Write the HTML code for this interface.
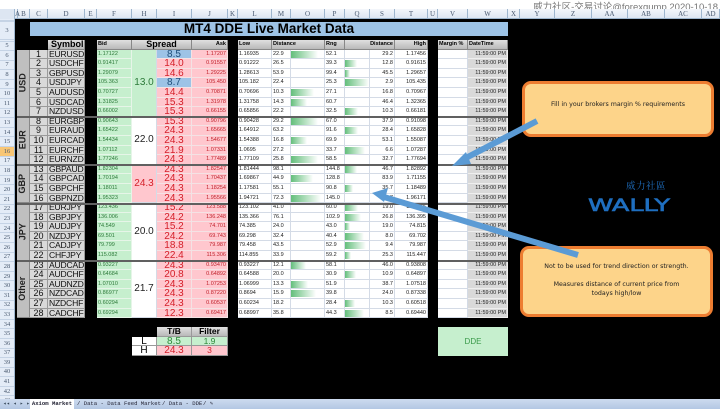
<!DOCTYPE html>
<html><head><meta charset="utf-8">
<style>
*{box-sizing:border-box;margin:0;padding:0}
body{width:720px;height:409px;background:#000;overflow:hidden;position:relative;font-family:"Liberation Sans","Noto Sans CJK SC",sans-serif;}
.top{position:absolute;left:0;top:0;width:720px;height:9px;background:#fff}
.wm{position:absolute;right:2px;top:-1px;font-size:9.5px;color:#777;font-family:"Liberation Sans","Noto Sans CJK SC",sans-serif;white-space:nowrap}
.colh{position:absolute;left:0;top:9px;width:720px;height:10px;background:linear-gradient(#f3f6fb,#dde6f2);border-bottom:1px solid #9eb6ce}
.colh span{position:absolute;top:0;height:10px;border-right:1px solid #9eb6ce;font-size:7px;color:#4a5a70;text-align:center;line-height:10px;font-family:"Liberation Serif",serif}
.rown{position:absolute;left:0;top:19px;width:15px;background:#e4ecf7;border-right:1px solid #9eb6ce}
.rown div{font-size:6.5px;color:#4a5a70;text-align:center;border-bottom:1px solid #c5d3e5;overflow:hidden;font-family:"Liberation Serif",serif;display:flex;align-items:center;justify-content:center}
.title{position:absolute;left:30px;top:22px;width:478px;height:14px;background:#9dc3e6;font-weight:bold;font-size:13.5px;text-align:center;line-height:14px;color:#000}
.g{position:absolute;left:17px;top:40px;display:grid;grid-template-columns:13px 18px 37px 12px 35px 25px 35px 36px 10px 34px 19px 34px 20px 25px 25px 33px 10px 30px 40px;grid-template-rows:repeat(29,9.6px)}
.g>div{font-size:5.5px;line-height:9.6px;white-space:nowrap;overflow:hidden;border-right:1px solid #d4dbe6;border-bottom:1px solid #d4dbe6;background:#fff;padding:0 1px;color:#222}
.g>i{display:block}
.h{background:linear-gradient(#e0e0e0,#b9b9b9)!important;font-weight:bold;border-color:#888!important;color:#000!important}
.hs{font-size:9px!important;text-align:center}
.g>.B{background:#bfbfbf;border-color:#888;font-weight:bold;font-size:9px;display:flex;align-items:center;justify-content:center}
.B span{transform:rotate(-90deg);display:block}
.g>.c{background:#d9d9d9;font-size:9px;text-align:center;border-color:#9a9a9a;color:#111}
.g>.d{background:#d9d9d9;font-size:8.6px;border-color:#9a9a9a;color:#111;padding-left:1px;letter-spacing:-0.2px}
.g>.f{background:#c6efce;color:#2d7a3a;border-color:#e6f5e8}
.g>.H{font-size:10px;display:flex;align-items:center;justify-content:center;color:#222}
.g>.i{background:#ffc7ce;color:#d4202a;font-size:10px;text-align:center;border-color:#f4e2e4}
.g>.bl{background:#9dc3e6;color:#1f4e79}
.g>.j{background:#ffc7ce;color:#c0202a;text-align:right;border-color:#f4e2e4}
.g>.r{text-align:right}
.g>.o,.g>.q{padding:1px 0}
.o b,.q b{display:block;height:7px;background:linear-gradient(to right,#63be7b,#fff)}
.g>.w{background:#d9d9d9;text-align:right;border-color:#eee}
.sep{position:absolute;height:2px;background:#606060}
.box{position:absolute;background:#fdd48a;border:3px solid #ed7d31;border-radius:9px;font-size:6.3px;text-align:center;color:#222;font-family:"DejaVu Sans",sans-serif}
.tb{position:absolute;left:132px;top:327px;display:grid;grid-template-columns:25px 35px 36px;grid-template-rows:repeat(3,9.6px)}
.tb div{font-size:10px;line-height:9.6px;text-align:center;border-right:1px solid #999;border-bottom:1px solid #999}
.dde{position:absolute;left:438px;top:327px;width:70px;height:29px;background:#c6efce;color:#3a9a4a;font-size:8px;text-align:center;line-height:29px}
.tabs{position:absolute;left:0;top:399px;width:720px;height:10px;background:linear-gradient(#cddbef,#b3c7e3);font-family:"Liberation Mono",monospace;font-size:5.6px;line-height:10px;color:#223;white-space:nowrap}
</style></head><body>
<div class="top"><div class="wm">威力社区-交易讨论@forexgump 2020-10-18</div></div>
<div class="colh">
<span style="left:0;width:15px;background:#dde6f2"></span>
<span style="left:15px;width:3px">A</span><span style="left:18px;width:12px">B</span><span style="left:30px;width:18px">C</span><span style="left:48px;width:37px">D</span><span style="left:85px;width:12px">E</span><span style="left:97px;width:35px">F</span><span style="left:132px;width:25px">H</span><span style="left:157px;width:35px">I</span><span style="left:192px;width:36px">J</span><span style="left:228px;width:10px">K</span><span style="left:238px;width:34px">L</span><span style="left:272px;width:19px">M</span><span style="left:291px;width:34px">O</span><span style="left:325px;width:20px">P</span><span style="left:345px;width:25px">Q</span><span style="left:370px;width:25px">S</span><span style="left:395px;width:33px">T</span><span style="left:428px;width:10px">U</span><span style="left:438px;width:30px">V</span><span style="left:468px;width:40px">W</span><span style="left:508px;width:12px">X</span><span style="left:520px;width:35px">Y</span><span style="left:555px;width:37px">Z</span><span style="left:592px;width:36px">AA</span><span style="left:628px;width:37px">AB</span><span style="left:665px;width:37px">AC</span><span style="left:702px;width:18px">AD</span>
</div>
<div class="rown">
<div style="height:1.5px"></div><div style="height:1.5px"></div><div style="height:18px">3</div><div style="height:1.5px"></div>
<div style="height:9.6px">5</div><div style="height:9.6px">6</div><div style="height:9.6px">7</div><div style="height:9.6px">8</div><div style="height:9.6px">9</div><div style="height:9.6px">10</div><div style="height:9.6px">11</div><div style="height:9.6px">12</div><div style="height:9.6px">13</div><div style="height:9.6px">14</div><div style="height:9.6px">15</div><div style="height:9.6px;background:#f8c675">16</div><div style="height:9.6px">17</div><div style="height:9.6px">18</div><div style="height:9.6px">19</div><div style="height:9.6px">20</div><div style="height:9.6px">21</div><div style="height:9.6px">22</div><div style="height:9.6px">23</div><div style="height:9.6px">24</div><div style="height:9.6px">25</div><div style="height:9.6px">26</div><div style="height:9.6px">27</div><div style="height:9.6px">28</div><div style="height:9.6px">29</div><div style="height:9.6px">30</div><div style="height:9.6px">31</div><div style="height:9.6px">32</div><div style="height:9.6px">33</div><div style="height:9.6px">34</div><div style="height:9.6px">35</div><div style="height:9.6px">36</div><div style="height:9.6px">37</div><div style="height:9.6px">39</div><div style="height:9.6px">40</div><div style="height:9.6px">41</div><div style="height:9.6px">42</div><div style="height:9.6px">43</div>
</div>
<div class="title">MT4 DDE Live Market Data</div>

<div class="g">
<i></i><i></i><div class="h hs" style="text-align:left;padding-left:3px">Symbol</div><i></i><div class="h">Bid</div><div class="h hs" style="grid-column:span 2">Spread</div><div class="h r">Ask</div><i></i><div class="h">Low</div><div class="h" style="grid-column:span 2">Distance</div><div class="h">Rng</div><div class="h r" style="grid-column:span 2">Distance</div><div class="h r">High</div><i></i><div class="h">Margin %</div><div class="h">DateTime</div>

<div class="B" style="grid-row:span 7"><span>USD</span></div><div class="c">1</div><div class="d">EURUSD</div><i></i><div class="f">1.17122</div><div class="H" style="grid-row:span 7;background:#c6efce;color:#2d7a3a">13.0</div><div class="i bl">8.5</div><div class="j">1.17207</div><i></i><div>1.16935</div><div>22.9</div><div class="o"><b style="width:27px"></b></div><div>52.1</div><div class="q"></div><div class="r">29.2</div><div class="r">1.17456</div><i></i><div></div><div class="w">11:59:00 PM</div>
<div class="c">2</div><div class="d">USDCHF</div><i></i><div class="f">0.91417</div><div class="i">14.0</div><div class="j">0.91557</div><i></i><div>0.91222</div><div>26.5</div><div class="o"></div><div>39.3</div><div class="q"><b style="width:12px"></b></div><div class="r">12.8</div><div class="r">0.91615</div><i></i><div></div><div class="w">11:59:00 PM</div>
<div class="c">3</div><div class="d">GBPUSD</div><i></i><div class="f">1.29079</div><div class="i">14.6</div><div class="j">1.29225</div><i></i><div>1.28613</div><div>53.9</div><div class="o"></div><div>99.4</div><div class="q"><b style="width:5px"></b></div><div class="r">45.5</div><div class="r">1.29657</div><i></i><div></div><div class="w">11:59:00 PM</div>
<div class="c">4</div><div class="d">USDJPY</div><i></i><div class="f">105.363</div><div class="i bl">8.7</div><div class="j">105.450</div><i></i><div>105.182</div><div>22.4</div><div class="o"></div><div>25.3</div><div class="q"><b style="width:24px"></b></div><div class="r">2.9</div><div class="r">105.435</div><i></i><div></div><div class="w">11:59:00 PM</div>
<div class="c">5</div><div class="d">AUDUSD</div><i></i><div class="f">0.70727</div><div class="i">14.4</div><div class="j">0.70871</div><i></i><div>0.70696</div><div>10.3</div><div class="o"><b style="width:23px"></b></div><div>27.1</div><div class="q"></div><div class="r">16.8</div><div class="r">0.70967</div><i></i><div></div><div class="w">11:59:00 PM</div>
<div class="c">6</div><div class="d">USDCAD</div><i></i><div class="f">1.31825</div><div class="i">15.3</div><div class="j">1.31978</div><i></i><div>1.31758</div><div>14.3</div><div class="o"><b style="width:16px"></b></div><div>60.7</div><div class="q"></div><div class="r">46.4</div><div class="r">1.32365</div><i></i><div></div><div class="w">11:59:00 PM</div>
<div class="c">7</div><div class="d">NZDUSD</div><i></i><div class="f">0.66002</div><div class="i">15.3</div><div class="j">0.66155</div><i></i><div>0.65856</div><div>22.2</div><div class="o"></div><div>32.5</div><div class="q"><b style="width:13px"></b></div><div class="r">10.3</div><div class="r">0.66181</div><i></i><div></div><div class="w">11:59:00 PM</div>

<div class="B" style="grid-row:span 5"><span>EUR</span></div><div class="c">8</div><div class="d">EURGBP</div><i></i><div class="f">0.90643</div><div class="H" style="grid-row:span 5">22.0</div><div class="i">15.3</div><div class="j">0.90796</div><i></i><div>0.90428</div><div>29.2</div><div class="o"><b style="width:27px"></b></div><div>67.0</div><div class="q"></div><div class="r">37.9</div><div class="r">0.91098</div><i></i><div></div><div class="w">11:59:00 PM</div>
<div class="c">9</div><div class="d">EURAUD</div><i></i><div class="f">1.65422</div><div class="i">24.3</div><div class="j">1.65665</div><i></i><div>1.64912</div><div>63.2</div><div class="o"></div><div>91.6</div><div class="q"><b style="width:13px"></b></div><div class="r">28.4</div><div class="r">1.65828</div><i></i><div></div><div class="w">11:59:00 PM</div>
<div class="c">10</div><div class="d">EURCAD</div><i></i><div class="f">1.54434</div><div class="i">24.3</div><div class="j">1.54677</div><i></i><div>1.54388</div><div>16.8</div><div class="o"><b style="width:16px"></b></div><div>69.9</div><div class="q"></div><div class="r">53.1</div><div class="r">1.55087</div><i></i><div></div><div class="w">11:59:00 PM</div>
<div class="c">11</div><div class="d">EURCHF</div><i></i><div class="f">1.07112</div><div class="i">21.9</div><div class="j">1.07331</div><i></i><div>1.0695</div><div>27.2</div><div class="o"></div><div>33.7</div><div class="q"><b style="width:20px"></b></div><div class="r">6.6</div><div class="r">1.07287</div><i></i><div></div><div class="w">11:59:00 PM</div>
<div class="c">12</div><div class="d">EURNZD</div><i></i><div class="f">1.77246</div><div class="i">24.3</div><div class="j">1.77489</div><i></i><div>1.77109</div><div>25.8</div><div class="o"><b style="width:27px"></b></div><div>58.5</div><div class="q"></div><div class="r">32.7</div><div class="r">1.77694</div><i></i><div></div><div class="w">11:59:00 PM</div>

<div class="B" style="grid-row:span 4"><span>GBP</span></div><div class="c">13</div><div class="d">GBPAUD</div><i></i><div class="f">1.82304</div><div class="H" style="grid-row:span 4;background:#ffc7ce;color:#d4202a">24.3</div><div class="i">24.3</div><div class="j">1.82547</div><i></i><div>1.81444</div><div>98.1</div><div class="o"></div><div>144.8</div><div class="q"><b style="width:12px"></b></div><div class="r">46.7</div><div class="r">1.82892</div><i></i><div></div><div class="w">11:59:00 PM</div>
<div class="c">14</div><div class="d">GBPCAD</div><i></i><div class="f">1.70194</div><div class="i">24.3</div><div class="j">1.70437</div><i></i><div>1.69867</div><div>44.9</div><div class="o"><b style="width:22px"></b></div><div>128.8</div><div class="q"></div><div class="r">83.9</div><div class="r">1.71155</div><i></i><div></div><div class="w">11:59:00 PM</div>
<div class="c">15</div><div class="d">GBPCHF</div><i></i><div class="f">1.18011</div><div class="i">24.3</div><div class="j">1.18254</div><i></i><div>1.17581</div><div>55.1</div><div class="o"></div><div>90.8</div><div class="q"><b style="width:8px"></b></div><div class="r">35.7</div><div class="r">1.18489</div><i></i><div></div><div class="w">11:59:00 PM</div>
<div class="c">16</div><div class="d">GBPNZD</div><i></i><div class="f">1.95323</div><div class="i">24.3</div><div class="j">1.95566</div><i></i><div>1.94721</div><div>72.3</div><div class="o"><b style="width:30px"></b></div><div>145.0</div><div class="q"></div><div class="r">72.7</div><div class="r">1.96171</div><i></i><div></div><div class="w">11:59:00 PM</div>

<div class="B" style="grid-row:span 6"><span>JPY</span></div><div class="c">17</div><div class="d">EURJPY</div><i></i><div class="f">123.436</div><div class="H" style="grid-row:span 6">20.0</div><div class="i">15.2</div><div class="j">123.588</div><i></i><div>123.102</div><div>41.0</div><div class="o"></div><div>60.0</div><div class="q"><b style="width:13px"></b></div><div class="r">19.0</div><div class="r">123.475</div><i></i><div></div><div class="w">11:59:00 PM</div>
<div class="c">18</div><div class="d">GBPJPY</div><i></i><div class="f">136.006</div><div class="i">24.2</div><div class="j">136.248</div><i></i><div>135.366</div><div>76.1</div><div class="o"></div><div>102.9</div><div class="q"><b style="width:16px"></b></div><div class="r">26.8</div><div class="r">136.395</div><i></i><div></div><div class="w">11:59:00 PM</div>
<div class="c">19</div><div class="d">AUDJPY</div><i></i><div class="f">74.549</div><div class="i">15.2</div><div class="j">74.701</div><i></i><div>74.385</div><div>24.0</div><div class="o"></div><div>43.0</div><div class="q"><b style="width:5px"></b></div><div class="r">19.0</div><div class="r">74.815</div><i></i><div></div><div class="w">11:59:00 PM</div>
<div class="c">20</div><div class="d">NZDJPY</div><i></i><div class="f">69.501</div><div class="i">24.2</div><div class="j">69.743</div><i></i><div>69.298</div><div>32.4</div><div class="o"></div><div>40.4</div><div class="q"><b style="width:19px"></b></div><div class="r">8.0</div><div class="r">69.702</div><i></i><div></div><div class="w">11:59:00 PM</div>
<div class="c">21</div><div class="d">CADJPY</div><i></i><div class="f">79.799</div><div class="i">18.8</div><div class="j">79.987</div><i></i><div>79.458</div><div>43.5</div><div class="o"></div><div>52.9</div><div class="q"><b style="width:21px"></b></div><div class="r">9.4</div><div class="r">79.987</div><i></i><div></div><div class="w">11:59:00 PM</div>
<div class="c">22</div><div class="d">CHFJPY</div><i></i><div class="f">115.082</div><div class="i">22.4</div><div class="j">115.306</div><i></i><div>114.855</div><div>33.9</div><div class="o"></div><div>59.2</div><div class="q"><b style="width:6px"></b></div><div class="r">25.3</div><div class="r">115.447</div><i></i><div></div><div class="w">11:59:00 PM</div>

<div class="B" style="grid-row:span 6"><span>Other</span></div><div class="c">23</div><div class="d">AUDCAD</div><i></i><div class="f">0.93227</div><div class="H" style="grid-row:span 6">21.7</div><div class="i">24.3</div><div class="j">0.93470</div><i></i><div>0.93227</div><div>12.1</div><div class="o"><b style="width:15px"></b></div><div>58.1</div><div class="q"></div><div class="r">46.0</div><div class="r">0.93808</div><i></i><div></div><div class="w">11:59:00 PM</div>
<div class="c">24</div><div class="d">AUDCHF</div><i></i><div class="f">0.64684</div><div class="i">20.8</div><div class="j">0.64892</div><i></i><div>0.64588</div><div>20.0</div><div class="o"></div><div>30.9</div><div class="q"><b style="width:11px"></b></div><div class="r">10.9</div><div class="r">0.64897</div><i></i><div></div><div class="w">11:59:00 PM</div>
<div class="c">25</div><div class="d">AUDNZD</div><i></i><div class="f">1.07010</div><div class="i">24.3</div><div class="j">1.07253</div><i></i><div>1.06999</div><div>13.3</div><div class="o"><b style="width:17px"></b></div><div>51.9</div><div class="q"></div><div class="r">38.7</div><div class="r">1.07518</div><i></i><div></div><div class="w">11:59:00 PM</div>
<div class="c">26</div><div class="d">NZDCAD</div><i></i><div class="f">0.86977</div><div class="i">24.3</div><div class="j">0.87220</div><i></i><div>0.8694</div><div>15.9</div><div class="o"><b style="width:25px"></b></div><div>39.8</div><div class="q"></div><div class="r">24.0</div><div class="r">0.87338</div><i></i><div></div><div class="w">11:59:00 PM</div>
<div class="c">27</div><div class="d">NZDCHF</div><i></i><div class="f">0.60294</div><div class="i">24.3</div><div class="j">0.60537</div><i></i><div>0.60234</div><div>18.2</div><div class="o"></div><div>28.4</div><div class="q"><b style="width:10px"></b></div><div class="r">10.3</div><div class="r">0.60518</div><i></i><div></div><div class="w">11:59:00 PM</div>
<div class="c">28</div><div class="d">CADCHF</div><i></i><div class="f">0.69294</div><div class="i">12.3</div><div class="j">0.69417</div><i></i><div>0.68997</div><div>35.8</div><div class="o"></div><div>44.3</div><div class="q"><b style="width:19px"></b></div><div class="r">8.5</div><div class="r">0.69440</div><i></i><div></div><div class="w">11:59:00 PM</div>
</div>

<div class="sep" style="left:17px;top:116.2px;width:211px"></div><div class="sep" style="left:238px;top:116.2px;width:190px"></div><div class="sep" style="left:438px;top:116.2px;width:70px"></div>
<div class="sep" style="left:17px;top:164.2px;width:211px"></div><div class="sep" style="left:238px;top:164.2px;width:190px"></div><div class="sep" style="left:438px;top:164.2px;width:70px"></div>
<div class="sep" style="left:17px;top:202.6px;width:211px"></div><div class="sep" style="left:238px;top:202.6px;width:190px"></div><div class="sep" style="left:438px;top:202.6px;width:70px"></div>
<div class="sep" style="left:17px;top:260.2px;width:211px"></div><div class="sep" style="left:238px;top:260.2px;width:190px"></div><div class="sep" style="left:438px;top:260.2px;width:70px"></div>

<div class="tb">
<div style="border:none"></div><div style="background:linear-gradient(#e0e0e0,#b9b9b9);font-weight:bold;font-size:8.5px">T/B</div><div style="background:linear-gradient(#e0e0e0,#b9b9b9);font-weight:bold;font-size:8.5px">Filter</div>
<div style="background:#fff">L</div><div style="background:#c6efce;color:#2d8a3a">8.5</div><div style="background:#c6efce;color:#2d8a3a;font-size:8.5px">1.9</div>
<div style="background:#fff">H</div><div style="background:#ffc7ce;color:#d4202a">24.3</div><div style="background:#ffc7ce;color:#d4202a;font-size:8.5px">3</div>
</div>
<div class="dde">DDE</div>

<div class="box" style="left:522px;top:81px;width:192px;height:56px;padding-top:17px">Fill in your brokers margin % requirements</div>
<div class="box" style="left:520px;top:246px;width:193px;height:71px;padding-top:13px;line-height:9px">Not to be used for trend direction or strength.<br><br>Measures distance of current price from<br>todays high/low</div>

<svg style="position:absolute;left:0;top:0" width="720" height="409">
<line x1="537" y1="121" x2="462" y2="160" stroke="#5b9bd5" stroke-width="6"/>
<polygon points="452,166 466,152 471,164" fill="#5b9bd5"/>
<line x1="578" y1="255" x2="384" y2="197" stroke="#5b9bd5" stroke-width="6"/>
<polygon points="372,193 388,188 384,202" fill="#5b9bd5"/>
<text x="588" y="211" font-family="DejaVu Sans, sans-serif" font-size="17" fill="#1f6fc0" textLength="82" lengthAdjust="spacingAndGlyphs" stroke="#1f6fc0" stroke-width="0.6">WALLY</text>
</svg>

<div style="position:absolute;left:626px;top:178px;font-family:'Noto Serif CJK SC',serif;font-size:9.5px;color:#1f6fc0;letter-spacing:0.5px">威力社區</div>

<div class="tabs">
<span style="position:absolute;left:3px;color:#345">◂◂ ◂ ▸ ▸▸</span>
<span style="position:absolute;left:30px;top:0;width:44px;text-align:center;background:#fff;font-weight:bold">Axiom Market</span>
<span style="position:absolute;left:77px">/ Data - Data Feed Market</span>
<span style="position:absolute;left:162px">/ Data - DDE</span>
<span style="position:absolute;left:203px">/ ✎</span>
</div>
</body></html>
